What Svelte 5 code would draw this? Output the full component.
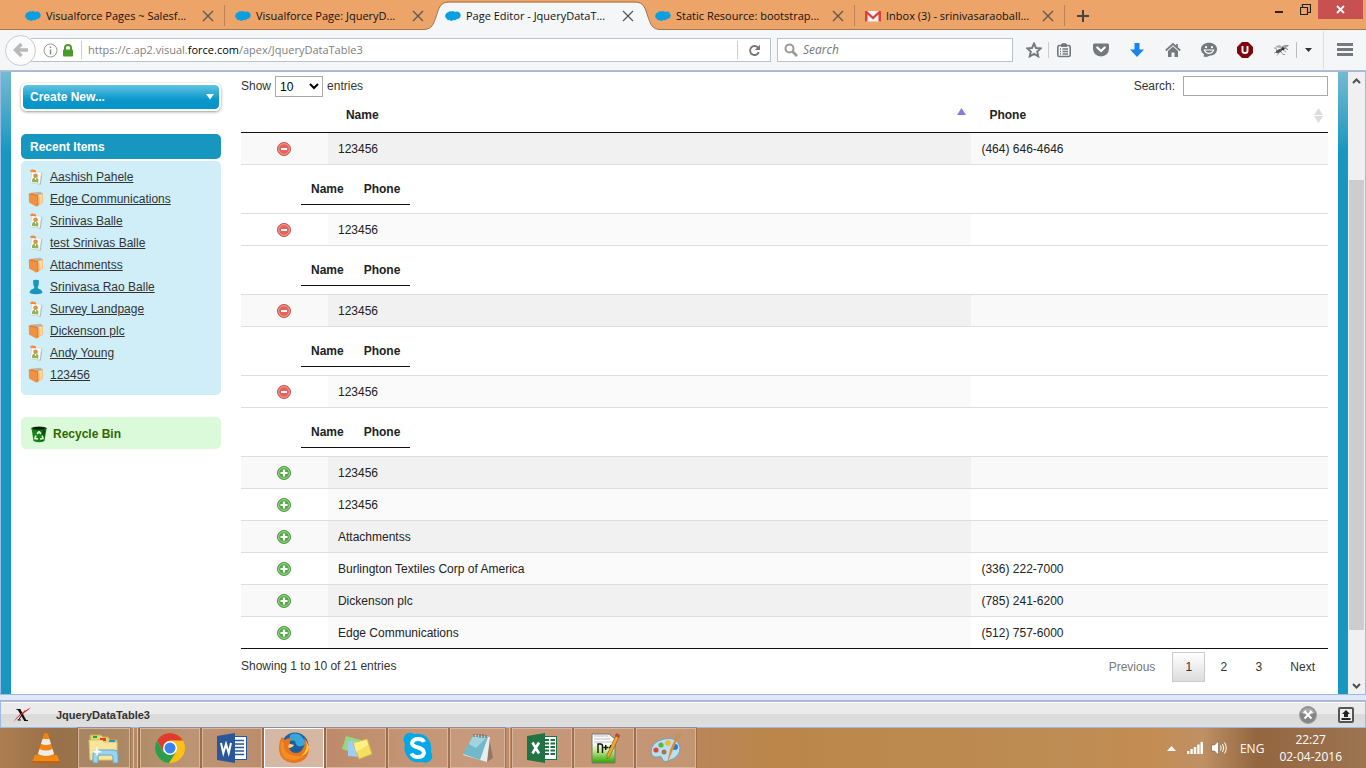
<script>
  const tabs = [
    { title: 'Visualforce Pages ~ Salesf...', icon: 'cloud' },
    { title: 'Visualforce Page: JqueryD...', icon: 'cloud' },
    { title: 'Page Editor - JqueryDataT...', icon: 'cloud', active: true },
    { title: 'Static Resource: bootstrap...', icon: 'cloud' },
    { title: 'Inbox (3) - srinivasaraoball...', icon: 'mail' }
  ];
  const recent = [
    ['contact', 'Aashish Pahele'],
    ['folder', 'Edge Communications'],
    ['contact', 'Srinivas Balle'],
    ['contact', 'test Srinivas Balle'],
    ['folder', 'Attachmentss'],
    ['user', 'Srinivasa Rao Balle'],
    ['contact', 'Survey Landpage'],
    ['folder', 'Dickenson plc'],
    ['contact', 'Andy Young'],
    ['folder', '123456']
  ];
  const rows = [
    { name: '123456', phone: '(464) 646-4646', open: true },
    { name: '123456', phone: '', open: true },
    { name: '123456', phone: '', open: true },
    { name: '123456', phone: '', open: true },
    { name: '123456', phone: '' },
    { name: '123456', phone: '' },
    { name: 'Attachmentss', phone: '' },
    { name: 'Burlington Textiles Corp of America', phone: '(336) 222-7000' },
    { name: 'Dickenson plc', phone: '(785) 241-6200' },
    { name: 'Edge Communications', phone: '(512) 757-6000' }
  ];
  const apps = ['vlc', 'explorer', 'chrome', 'word', 'firefox', 'sticky', 'skype', 'notepad', 'excel', 'npp', 'paint'];
</script>

<div class="window">
  <header class="tabstrip">
    <nav class="tabs" aria-label="Browser tabs">
      {#each tabs as tab}
        <div class="tab" class:active={tab.active}>
          {#if tab.active}
            <svg class="shape" viewBox="0 0 236 30" preserveAspectRatio="none" aria-hidden="true">
              <path d="M0 30V29.500C8 29 9 25 12 17C15 8 16 2.500 25 2.500H211C220 2.500 221 8 224 17C227 25 228 29 236 29.500V30Z" fill="#f5f6f7" />
              <path d="M0 29.500C8 29 9 25 12 17C15 8 16 2 25 2H211C220 2 221 8 224 17C227 25 228 29 236 29.500" fill="none" stroke="#a2754f" />
            </svg>
          {/if}
          <a class="tab-link" href="#tab">
            {#if tab.icon === 'cloud'}
              <svg width="16" height="16" viewBox="0 0 16 16" aria-hidden="true"><path d="M3.200 4.200Q4.500 2.600 6.500 3.600Q8.300 2 9.800 4Q12.500 2.600 14.600 4.800Q16.600 7 15 9.600Q13.800 11.400 11.800 11Q10.300 13.200 8.300 11.800Q6.500 14.200 4.700 12Q2 12.600 1.600 10.400Q-.6 9 .5 6.800Q.9 4.300 3.200 4.200Z" fill="#0a9fe0" /></svg>
            {:else}
              <svg width="16" height="16" viewBox="0 0 16 16" aria-hidden="true"><path d="M1 3H15V13.500H1Z" fill="#f4f4f4" /><path d="M0 3H2L8 8.500L14 3H16V13.500H13.500V6.600L8 11.400L2.500 6.600V13.500H0Z" fill="#dd4038" /></svg>
            {/if}
            <span>{tab.title}</span>
          </a>
          <button class="close" aria-label="Close tab"><svg width="12" height="12" viewBox="0 0 12 12"><path d="M1 1L11 11M11 1L1 11" stroke="#555" stroke-width="1.200" /></svg></button>
        </div>
      {/each}
      <button class="newtab" aria-label="New tab"><svg width="12" height="12" viewBox="0 0 12 12"><path d="M6 0V12M0 6H12" stroke="#444" stroke-width="2" /></svg></button>
    </nav>
    <div class="controls">
      <button aria-label="Minimize"><svg width="10" height="14" viewBox="0 0 10 14"><path d="M1 9H9" stroke="#222" stroke-width="2" /></svg></button>
      <button aria-label="Restore"><svg width="11" height="11" viewBox="0 0 11 11"><path d="M.5 3.500H7.500V10.500H.5ZM2.500 3V.5H10.500V8.500H8" fill="none" stroke="#222" stroke-width="1.200" /></svg></button>
      <button class="exit" aria-label="Close"><svg width="9" height="9" viewBox="0 0 9 9"><path d="M1 1L8 8M8 1L1 8" stroke="#fff" stroke-width="1.800" /></svg></button>
    </div>
  </header>

  <div class="toolbar">
    <button class="back" aria-label="Back"><svg width="16" height="16" viewBox="0 0 16 16"><path d="M15 8H3M8.500 2L2.500 8L8.500 14" fill="none" stroke="#b9b9b9" stroke-width="3.500" /></svg></button>
    <div class="urlbar">
      <svg class="info" width="15" height="15" viewBox="0 0 15 15" aria-hidden="true"><circle cx="7.500" cy="7.500" r="6.500" fill="none" stroke="#999" /><path d="M7.500 6.500V11.500M7.500 3.500V5" stroke="#888" stroke-width="1.400" /></svg>
      <svg width="10" height="13" viewBox="0 0 10 13" aria-hidden="true"><path d="M2 6V3.800Q2 1 5 1Q8 1 8 3.800V6" fill="none" stroke="#4c9b2a" stroke-width="2" /><rect y="5.500" width="10" height="7" rx="1" fill="#4c9b2a" /></svg>
      <span class="url">https://c.ap2.visual.<b>force.com</b>/apex/JqueryDataTable3</span>
      <button class="reload" aria-label="Reload"><svg width="13" height="13" viewBox="0 0 13 13"><path d="M10 3.600A4.500 4.500 0 1 0 10.800 8.200" fill="none" stroke="#777" stroke-width="1.900" /><path d="M12 .8V6H6.800Z" fill="#777" /></svg></button>
    </div>
    <label class="websearch">
      <svg width="15" height="15" viewBox="0 0 15 15" aria-hidden="true"><circle cx="5.500" cy="5.500" r="4" fill="none" stroke="#999" stroke-width="2" /><path d="M8.500 8.500L13 13" stroke="#999" stroke-width="2.600" /></svg>
      <input type="text" placeholder="Search" aria-label="Search the web" />
    </label>
    <div class="tools">
      <button class="star" aria-label="Bookmark"><svg width="16" height="16" viewBox="0 0 16 16"><path d="M8 1.500L10 6L14.800 6.400L11.200 9.600L12.300 14.400L8 11.900L3.700 14.400L4.800 9.600L1.200 6.400L6 6Z" fill="none" stroke="#75797d" stroke-width="1.900" /></svg></button>
      <button class="split" aria-label="Library"><svg width="16" height="16" viewBox="0 0 16 16"><rect x="1.800" y="3.500" width="12.400" height="11" rx="1.500" fill="none" stroke="#75797d" stroke-width="1.600" /><path d="M5 3Q5 1 8 1Q11 1 11 3V5H5Z" fill="#75797d" /><path d="M4 7H5M6.500 7H12M4 9.500H5M6.500 9.500H12M4 12H5M6.500 12H12" stroke="#75797d" stroke-width="1.300" /></svg></button>
      <button aria-label="Pocket"><svg width="16" height="16" viewBox="0 0 16 16"><path d="M1.500 1.500H14.500Q16 1.500 16 3V7Q15.500 14 8 14.500Q.5 14 0 7V3Q0 1.500 1.500 1.500Z" fill="#75797d" /><path d="M4.300 5.500L8 9L11.700 5.500" fill="none" stroke="#fff" stroke-width="2.200" stroke-linecap="round" /></svg></button>
      <button aria-label="Downloads"><svg width="16" height="16" viewBox="0 0 16 16"><path d="M5.500 1H10.500V7.500H15L8 15L1 7.500H5.500Z" fill="#1984ee" /></svg></button>
      <button aria-label="Home"><svg width="16" height="16" viewBox="0 0 16 16"><path d="M.8 8.500L8 2L15.200 8.500M12 5V2" fill="none" stroke="#75797d" stroke-width="1.700" /><path d="M3 9L8 4.600L13 9V15H9.500V10.500H6.500V15H3Z" fill="#75797d" /></svg></button>
      <button aria-label="Chat"><svg width="16" height="16" viewBox="0 0 16 16"><path d="M8 .8C12.500 .8 16 3.400 16 7.300C16 11 12.700 13.800 8.300 13.800C6 15.500 3.800 15 2.300 14.300Q3.500 13.500 3 12.300C1 11 0 9.500 0 7.300C0 3.400 3.500 .8 8 .8Z" fill="#75797d" /><circle cx="5" cy="5.200" r="1.100" fill="#fff" /><circle cx="11" cy="5.200" r="1.100" fill="#fff" /><path d="M3.300 8H12.700Q11.500 11.300 8 11.300Q4.500 11.300 3.300 8Z" fill="none" stroke="#fff" stroke-width="1.200" /></svg></button>
      <button aria-label="Blocker"><svg width="16" height="16" viewBox="0 0 16 16"><path d="M5 0H11L16 5V11L11 16H5L0 11V5Z" fill="#800409" /><path d="M5.500 4V9Q5.500 11 8 11Q10.500 11 10.500 9V4" fill="none" stroke="#fff" stroke-width="1.900" /></svg></button>
      <button aria-label="Debugger"><svg width="16" height="16" viewBox="0 0 16 16"><path d="M1 11L4 10L3 6L1 6M6 11L4 13.500M8 10L10 12.500L12 12.500M10 8L13 10" fill="none" stroke="#777" stroke-width=".7" /><ellipse cx="6" cy="9" rx="3.300" ry="1.700" transform="rotate(-25 6 9)" fill="#555" /><circle cx="10" cy="6.500" r="1.700" fill="#333" /><path d="M3 5Q7 2 9 5.500Z" fill="#bbb" stroke="#888" stroke-width=".5" /><path d="M9 5Q11 2.500 15.500 3.500L12 6L15 7.500Z" fill="#aaa" stroke="#666" stroke-width=".5" /></svg></button>
      <button class="drop" aria-label="Debugger options"><svg width="7" height="4" viewBox="0 0 7 4"><path d="M0 0H7L3.500 4Z" fill="#333" /></svg></button>
      <button class="menu" aria-label="Menu"><svg width="16" height="14" viewBox="0 0 16 14"><path d="M0 1.500H16M0 6.500H16M0 11.500H16" stroke="#75797d" stroke-width="3" /></svg></button>
    </div>
  </div>

  <div class="viewport">
    <div class="page">
      <aside>
        <button class="create">Create New...<svg width="8" height="6" viewBox="0 0 8 6" aria-hidden="true"><path d="M0 0H8L4 5.500Z" fill="#fff" /></svg></button>
        <section class="recent">
          <h2>Recent Items</h2>
          <ul>
            {#each recent as [kind, label]}
              <li>
                <svg width="16" height="16" viewBox="0 0 16 16" aria-hidden="true">
                  {#if kind === 'contact'}
                    <path d="M4 3L14.500 4L12.800 15.800L3 14Z" fill="#999" opacity=".6" />
                    <path d="M4 2L13.500 3.500L11.700 15L2.300 13.700Z" fill="#fdfdfb" stroke="#ccc" stroke-width=".5" />
                    <path d="M2.300 1.200Q4.500-.2 8 1.500V3.500L2.300 2.700Z" fill="#f28a36" />
                    <path d="M4 13Q3.500 8.500 7.200 8.500Q11 8.500 10.300 13.500Z" fill="#8fb355" /><circle cx="7.600" cy="6.800" r="2.300" fill="#d99248" /><path d="M6.700 9H8.400L7.300 11.500Z" fill="#fff" />
                  {:else if kind === 'folder'}
                    <path d="M5 1.500L12.500 .7L15 2.500V11.500L8 15.500Z" fill="#b9b8ad" /><path d="M9.500 5L15 2.500V11.500L8.500 15.500Z" fill="#ffc078" /><path d="M11 5L13 4.300V12" fill="none" stroke="#fff0d8" />
                    <path d="M.8 3L4 1.500L10 4L10.500 14.700L8 15.500L1 11.500Z" fill="#f09244" /><path d="M.8 3L9.500 5L9.800 14.500" fill="none" stroke="#cf7631" stroke-width=".7" />
                  {:else}
                    <path d="M5 1.500Q8-.2 11 1.500Q11 6.500 9.600 8.500Q10 10 12.500 10.500Q14.500 11.500 14.500 14Q8 16.500 1.500 14Q1.500 11.500 3.500 10.500Q6 10 6.400 8.500Q5 6.500 5 1.500Z" fill="#1797c0" />
                  {/if}
                </svg>
                <a href="#item">{label}</a>
              </li>
            {/each}
          </ul>
        </section>
        <a class="recycle" href="#bin">
          <svg width="16" height="17" viewBox="0 0 16 17" aria-hidden="true"><path d="M.5 2.500L2.500 15Q8 17.500 13.500 15L15.500 2.500Z" fill="#168316" /><path d="M11 4H14.500L13 14L10.500 15.500Z" fill="#065806" /><ellipse cx="8" cy="2.400" rx="7.800" ry="2" fill="#164c14" /><ellipse cx="8" cy="2.200" rx="5.500" ry="1.100" fill="#061b05" /><path d="M6 7.800L8 5.800L10 7.800M4.800 9.500L4 12.500L7 13M11.200 9.500L12 12.500L9 13" fill="none" stroke="#dff5dc" stroke-width="1.700" /></svg>
          Recycle Bin
        </a>
      </aside>

      <main>
        <div class="bar top">
          <label>Show <select><option>10</option><option>25</option></select> entries</label>
          <label class="find">Search:<input type="search" /></label>
        </div>
        <table class="grid">
          <colgroup><col class="c1" /><col class="c2" /><col /></colgroup>
          <thead>
            <tr>
              <th aria-label="Details"></th>
              <th><span class="th">Name<svg width="9" height="15" viewBox="0 0 9 15" aria-hidden="true"><path d="M0 7L4.500 0L9 7Z" fill="#8080dc" /></svg></span></th>
              <th><span class="th">Phone<svg width="9" height="15" viewBox="0 0 9 15" aria-hidden="true"><path d="M0 7L4.500 0L9 7ZM0 8H9L4.500 15Z" fill="#dcdcdc" /></svg></span></th>
            </tr>
          </thead>
          <tbody>
            {#each rows as row, i}
              <tr class="record" class:odd={i % 2 === 0}>
                <td class="toggle">
                  <button aria-label={row.open ? 'Hide details' : 'Show details'}>
                    <svg width="14" height="14" viewBox="0 0 14 14">
                      <circle cx="7" cy="7" r="6.500" fill={row.open ? '#e5635a' : '#53aa45'} stroke={row.open ? '#c0524a' : '#4a9640'} />
                      <circle cx="7" cy="7" r="5.400" fill="none" stroke={row.open ? '#f2a29b' : '#a5d69c'} />
                      {#if row.open}<path d="M4 7H10" stroke="#fff" stroke-width="2" />{:else}<path d="M3.500 7H10.500M7 3.500V10.500" stroke="#fff" stroke-width="2.200" />{/if}
                    </svg>
                  </button>
                </td>
                <td class="sorted">{row.name}</td>
                <td>{row.phone}</td>
              </tr>
              {#if row.open}
                <tr class="child">
                  <td colspan="3">
                    <table class="inner"><thead><tr><th>Name</th><th>Phone</th></tr></thead></table>
                  </td>
                </tr>
              {/if}
            {/each}
          </tbody>
        </table>
        <div class="bar bottom">
          <span>Showing 1 to 10 of 21 entries</span>
          <nav class="pages" aria-label="Pages">
            <button class="prev">Previous</button>
            <button class="current">1</button>
            <button>2</button>
            <button>3</button>
            <button>Next</button>
          </nav>
        </div>
      </main>
    </div>
    <div class="scroll" aria-hidden="true">
      <svg width="15" height="18" viewBox="0 0 15 18"><path d="M4 11L7.500 7.500L11 11" fill="none" stroke="#505050" stroke-width="2" /></svg>
      <div class="track"><div class="thumb"></div></div>
      <svg width="15" height="18" viewBox="0 0 15 18"><path d="M4 8L7.500 11.500L11 8" fill="none" stroke="#505050" stroke-width="2" /></svg>
    </div>
  </div>

  <div class="devbar">
    <svg width="18" height="16" viewBox="0 0 18 16" aria-hidden="true"><path d="M3.500 2.500H7.500M11 13.500H15M4.500 13H8M12 3.500L5.500 13" stroke="#111" stroke-width="1" /><path d="M4.500 2.500H7.500L13.500 13.500H11Z" fill="#111" /><path d="M.3 15.500Q4 9 9.500 5.500T17.700 .3Q16 3.500 11 6T.3 15.500Z" fill="#e22" /></svg>
    <strong>JqueryDataTable3</strong>
    <div class="devtools">
      <button aria-label="Tools"><svg width="18" height="18" viewBox="0 0 18 18"><circle cx="9" cy="9" r="8.500" fill="#858585" stroke="#a0a0a0" /><path d="M2 7Q3 2 9 2T16 7Q9 10 2 7Z" fill="#aaa" /><path d="M5.500 5.500L12.500 12.500M12.500 5.500L5.500 12.500" stroke="#fff" stroke-width="2" /><path d="M4.500 7L7 4.500M11 4.500L13.500 7" stroke="#fff" stroke-width="1.500" /></svg></button>
      <button aria-label="Expand"><svg width="16" height="16" viewBox="0 0 16 16"><rect x="1" y="1" width="14" height="14" rx="1" fill="#eee" stroke="#555" stroke-width="2" /><path d="M8 3L12 7H10V10H6V7H4ZM3.500 11H12.500V13H3.500Z" fill="#222" /></svg></button>
    </div>
  </div>

  <footer class="taskbar">
    {#each apps as app}
      <button class="app {app}" aria-label={app}>
        <svg width="32" height="32" viewBox="0 0 32 32">
          {#if app === 'vlc'}
            <path d="M5 23H27L30 30H2Z" fill="#f08a16" /><path d="M2 29H30V31H2Z" fill="#c9610c" /><path d="M14 2Q16 0 18 2L25 24Q16 29 7 24Z" fill="#f28312" /><path d="M12.600 7H19.400L21 12Q16 14 11 12ZM9.500 17Q16 20 22.500 17L24 22Q16 26 8 22Z" fill="#ececec" />
          {:else if app === 'explorer'}
            <path d="M2 3H13L15 5H20L22 8H29V27H4Z" fill="#ecd076" stroke="#c9a94e" /><path d="M5 4H9V6H5Z" fill="#18a83c" /><path d="M13 7H18V9H13Z" fill="#d6452b" /><path d="M21 9H26V11H21Z" fill="#2d8fd0" /><path d="M1 8H14L16 10H29V28H2Z" fill="#f8e59a" stroke="#dcc06c" /><path d="M12 6H18V8H12Z" fill="#d6452b" /><path d="M21 8H27V10H21Z" fill="#2d8fd0" /><path d="M5 31V22Q5 18 9 18H26Q30 18 30 22V31H25V25Q25 23 23 23H12Q10 23 10 25V31Z" fill="#9cd3ee" stroke="#5aa9d2" /><path d="M9 14L10 18L14 20L10 21L9 25L8 21L4 20L8 18Z" fill="#fff" />
          {:else if app === 'chrome'}
            <circle cx="16" cy="16" r="15" fill="#fbc116" /><path d="M3 8.500A15 15 0 0 1 29 8.500H16Q9.500 9 9.500 19.500Z" fill="#df3c2f" /><path d="M3 8.500A15 15 0 0 0 15 31L22 20Q16 25 9.500 19.500Z" fill="#2c9e4b" /><circle cx="16" cy="16" r="7" fill="#fff" /><circle cx="16" cy="16" r="5.500" fill="#3d83ef" />
          {:else if app === 'word' || app === 'excel'}
            <rect x="16" y="4.500" width="14.500" height="23" fill="#fff" stroke={app === 'word' ? '#2a579a' : '#217346'} />
            {#if app === 'word'}<path d="M19 8.500H28M19 12H28M19 15.500H28M19 19H28M19 22.500H28" stroke="#2a579a" stroke-width="1.500" />{:else}<path d="M19 8H23M19 11.500H23M19 15H23M19 18.500H23M19 22H23M24.500 8H29M24.500 11.500H29M24.500 15H29M24.500 18.500H29M24.500 22H29" stroke="#217346" stroke-width="2" />{/if}
            <path d="M1 4L19 1V31L1 28Z" fill={app === 'word' ? '#2a579a' : '#217346'} />
            {#if app === 'word'}<path d="M5 11L7.300 21L10 12L12.700 21L15 11" fill="none" stroke="#fff" stroke-width="2" />{:else}<path d="M6.500 10.500L13 21.500M13 10.500L6.500 21.500" stroke="#fff" stroke-width="2.600" />{/if}
          {:else if app === 'firefox'}
            <circle cx="17" cy="14" r="13.500" fill="#1c5f9c" /><path d="M12 3Q20-1 25 6T24 14Q18 16 17 9Q14 8 11 9Z" fill="#37a6db" /><path d="M4 5L7 8Q10 5 14 7Q11 9 12 12L16 13Q15 16 11 16Q13 21 18 21T25 16Q28 13 26 6Q31 10 31 17Q30 30 16 31Q2 30 1 17Q1 9 4 5Z" fill="#e9741e" /><path d="M3 9Q1 20 7 26Q17 31 26 24Q17 25 11 22T6 11Z" fill="#f38f22" /><path d="M28 9Q31 18 23 24Q30 22 31 15Z" fill="#ffd13f" /><path d="M12 12L16 13Q15 15 11 16Q9 14 12 12Z" fill="#ffd9a0" />
          {:else if app === 'sticky'}
            <path d="M6 4L21 8L17 22L2 17Z" fill="#96d77f" /><path d="M8 9L22 9L21 25L8 24Z" fill="#9dcef8" /><path d="M13 11L27 7L32 22L19 27Z" fill="#f4df62" stroke="#d8be42" /><path d="M14 11L27 8L28 13L16 20Z" fill="#ffef87" />
          {:else if app === 'skype'}
            <path d="M3 3Q7-1 12 2Q24 0 28 10Q30 15 29 20Q32 25 28 29Q24 32 20 30Q7 32 3 20Q2 16 3 12Q0 7 3 3Z" fill="#00a8ea" /><path d="M22 10Q21 7 16 7T10 11Q10 14 16 15.500T22 21Q21 25 16 25T9.500 21.500" fill="none" stroke="#fff" stroke-width="4" />
          {:else if app === 'notepad'}
            <path d="M27 5L31 26L25 30L20 27Z" fill="#74604b" opacity=".6" /><path d="M12 3L28 5L25 30L1 23Z" fill="#e6edf1" /><path d="M11 4L26 5L18 28L1 22Z" fill="#72b8c9" /><path d="M11 4L25 5L14 16L7 12Z" fill="#a2d4df" /><path d="M12 2V5M15 2V5M18 2V6M21 2V6M24 3V6" stroke="#555" />
          {:else if app === 'npp'}
            <defs><linearGradient id="leaf" x1="0" y1="0" x2="0" y2="1"><stop offset=".3" stop-color="#fff" /><stop offset=".6" stop-color="#bfe68a" /><stop offset="1" stop-color="#2ea300" /></linearGradient></defs>
            <path d="M4 2H21L27 7V31H4Z" fill="url(#leaf)" stroke="#777" /><path d="M6 4H20M6 7H22M6 10H25" stroke="#bbb" /><path d="M10 21V12H12.500Q14.500 12 14.500 14V21M15.500 15.500H20M17.700 13V18M20.500 15.500H25M22.700 13V18" fill="none" stroke="#111" stroke-width="1.400" /><path d="M28 3L31 5L22 24L19 27V23Z" fill="#edaa30" stroke="#8a5b18" stroke-width=".7" /><path d="M28 1L32 3L31 6L27 4Z" fill="#ba4548" />
          {:else}
            <path d="M1 20Q1 10 14 7T30 15Q31 25 18 29Q13 31 12 26Q11 23 8 25Q2 26 1 20Z" fill="#b9dff1" stroke="#6da0bb" /><circle cx="6" cy="18" r="2.600" fill="#dc473c" /><circle cx="11" cy="13" r="2.600" fill="#62b143" /><circle cx="18" cy="11" r="2.800" fill="#f3bb29" /><circle cx="25" cy="15" r="3" fill="#267bce" /><circle cx="14" cy="20" r="2.500" fill="#a17650" /><path d="M27 8L22 20L17 32L20 18L25 7Z" fill="#e58a2e" /><path d="M24 7L26 2L32 1L30 6L27 8Z" fill="#c2925f" />
          {/if}
        </svg>
      </button>
    {/each}
    <div class="tray">
      <svg width="9" height="5" viewBox="0 0 9 5" aria-hidden="true"><path d="M0 5L4.500 0L9 5Z" fill="#fff" /></svg>
      <svg width="16" height="14" viewBox="0 0 16 14" aria-hidden="true"><path d="M0 10H2.400V13H0ZM3.400 8H5.800V13H3.400ZM6.800 6H9.200V13H6.800ZM10.200 3.500H12.600V13H10.200ZM13.500 1H16V13H13.500Z" fill="#fff" /></svg>
      <svg width="16" height="16" viewBox="0 0 16 16" aria-hidden="true"><path d="M.5 5H3.500L7.500 1V15L3.500 11H.5Z" fill="#fff" stroke="#62472f" stroke-width=".5" /><path d="M9.500 5.500Q11 8 9.500 10.500M11.500 4Q14 8 11.500 12M13.500 2.500Q17 8 13.500 13.500" fill="none" stroke="#fff" stroke-width="1" /></svg>
      <span>ENG</span>
      <time>22:27<br />02-04-2016</time>
    </div>
  </footer>
</div>

<style>
  :global(body) { margin: 0; }
  * { box-sizing: border-box; }
  button { border: 0; padding: 0; margin: 0; background: none; font: inherit; color: inherit; display: flex; align-items: center; justify-content: center; }
  svg { display: block; flex: none; }
  .window { display: flex; flex-direction: column; min-height: 100vh; font: 12px/15px "Liberation Sans", Arial, sans-serif; color: #333; background: #dfe8f8; }

  .tabstrip { display: flex; justify-content: space-between; height: 30px; background: #eda468; border-bottom: 1px solid #a2754f; font: 11px/16px "Open Sans", sans-serif; color: #111; }
  .tabs { display: flex; padding-left: 15px; min-width: 0; }
  .tab { position: relative; display: flex; align-items: center; width: 210px; padding: 2px 11px 0 10px; }
  .tab::after { content: ""; position: absolute; right: 0; top: 5px; bottom: 3px; width: 1px; background: #bc8453; }
  .tab.active::after, .tab:nth-child(2)::after { display: none; }
  .shape { position: absolute; left: -11px; top: 0; width: 236px; height: 30px; }
  .tab-link { position: relative; display: flex; flex: 1; min-width: 0; gap: 5px; align-items: center; color: inherit; text-decoration: none; white-space: nowrap; }
  .close { position: relative; }
  .newtab { margin-left: 12px; padding-top: 2px; }
  .controls { display: flex; align-items: flex-start; padding-right: 3px; }
  .controls button { width: 26px; height: 19px; }
  .controls .exit { width: 45px; background: #c75050; }

  .toolbar { display: flex; align-items: center; height: 41px; padding-left: 5px; background: #f5f6f7; border-bottom: 1px solid #b9bdbb; font: 11px/18px "Open Sans", sans-serif; }
  .back { position: relative; width: 31px; height: 31px; border: 1px solid #c9cbce; border-radius: 50%; background: #fbfbfb; }
  .urlbar { display: flex; flex: 1; align-items: center; height: 24px; margin-left: -5px; padding-left: 12px; background: #fff; border: 1px solid #b8c2cb; border-left: 0; }
  .info { margin-right: 5px; }
  .url { flex: 1; margin-left: 8px; padding-left: 6px; border-left: 1px solid #ccc; color: #808080; white-space: nowrap; }
  .url b { font-weight: 400; color: #000; }
  .reload { width: 33px; height: 18px; border-left: 1px solid #ccc; }
  .websearch { display: flex; align-items: center; gap: 4px; width: 236px; height: 24px; margin-left: 6px; padding-left: 6px; border: 1px solid #b8c2cb; background: #fff; }
  .websearch input { flex: 1; min-width: 0; padding: 0; border: 0; outline: 0; background: none; font: 12px/18px "Open Sans", sans-serif; }
  .websearch input::placeholder { color: #777; font-style: italic; opacity: 1; }
  .tools { display: flex; align-items: center; }
  .tools button { width: 36px; height: 30px; }
  .tools .star { width: 28px; margin-left: 7px; }
  .tools .split { width: 35px; height: 16px; padding-right: 4px; border-left: 1px solid #ccc; }
  .tools .drop { width: 24px; height: 16px; border-left: 1px solid #bbb; margin: 0 3px 0 -3px; }
  .tools .menu { width: 43px; height: 38px; border-left: 1px solid #ddd; }

  .viewport { display: flex; flex: 1; background: #fff; border: 1px solid #9db9e6; }
  .page { display: flex; flex: 1; gap: 20px; padding: 4px 10px 10px; border: solid transparent; border-width: 0 10px; background: linear-gradient(#fff, #fff) padding-box, linear-gradient(#74bad2, #1797c0 80px) border-box; }
  aside { width: 200px; flex: none; padding-top: 7px; }
  .create { justify-content: space-between; width: 100%; height: 28px; padding: 0 5px 0 7px; border: 2px solid #fff; border-radius: 6px; background: linear-gradient(#62c4e3, #0a98ca 60%, #0693c5) padding-box; box-shadow: 0 1px 3px #999; color: #fff; font-weight: 700; }
  .recent { margin-top: 23px; }
  h2 { margin: 0 0 2px; padding: 6px 9px 4px; border-radius: 5px; background: #1797c0; color: #fff; font-size: 12px; line-height: 15px; }
  ul { list-style: none; margin: 0; padding: 5px 7px 9px; border-radius: 5px; background: #cfeef8; }
  li { display: flex; align-items: center; gap: 6px; height: 22px; }
  li a { color: #333; }
  .recycle { display: flex; align-items: center; gap: 6px; height: 32px; margin-top: 22px; padding: 3px 10px 0; border-radius: 5px; background: #dafada; color: #360; font-weight: 700; text-decoration: none; }

  main { flex: 1; min-width: 0; }
  .bar { display: flex; justify-content: space-between; }
  .top { height: 21px; }
  .bar label { display: flex; align-items: center; gap: 4px; }
  select { width: 48px; height: 21px; padding: 0; border: 1px solid #aaa; background: #fff; font: 12px "Liberation Sans", Arial, sans-serif; color: #000; }
  .bar .find { height: 20px; gap: 8px; }
  .find input { width: 145px; height: 20px; border: 1px solid #aaa; background: #fff; }
  table { border-collapse: separate; border-spacing: 0; }
  .grid { width: 100%; table-layout: fixed; border-bottom: 1px solid #111; color: #222; }
  .c1 { width: 8%; }
  .c2 { width: 59.2%; }
  th { padding: 11px 0 9px 18px; border-bottom: 1px solid #111; text-align: left; font-weight: 700; }
  .th { display: flex; justify-content: space-between; padding-right: 5px; }
  td { padding: 9px 10px 7px; height: 32px; border-top: 1px solid #ddd; }
  tbody tr:first-child td { border-top: 0; height: 31px; }
  .odd td { background: #f9f9f9; }
  .sorted { background: #fafafa; }
  .odd .sorted { background: #f1f1f1; }
  .toggle, .child td { padding: 8px 10px; }
  .toggle button { margin: 0 auto; height: 15px; }
  .inner { margin-left: 50px; }
  .inner th { padding: 9px 10px 7px; }
  .bottom { padding-top: 3px; line-height: 28px; }
  .pages { display: flex; gap: 2px; }
  .pages button { min-width: 33px; height: 30px; padding: 0 12px; border: 1px solid transparent; }
  .pages .prev { color: #777; margin-right: 2px; }
  .pages .current { border-color: #cacaca; background: linear-gradient(#fff, #dcdcdc); }

  .scroll { display: flex; flex-direction: column; width: 17px; padding: 0 1px; background: #f0f0f0; }
  .track { flex: 1; display: flex; padding-top: 90px; padding-bottom: 46px; }
  .thumb { flex: 1; background: #cdcdcd; }

  .devbar { display: flex; align-items: center; height: 28px; margin-top: 5px; padding: 2px 11px 0 12px; border: 1px solid #9db9e6; background: linear-gradient(#bbb, #bbb 1px, #fff 1px, #fff 2px, #ebebeb 2px, #ebebeb 50%, #dadada 50%, #dedede); font-size: 11px; }
  .devbar strong { flex: 1; margin-left: 25px; }
  .devtools { display: flex; gap: 21px; }

  .taskbar { display: flex; gap: 2px; height: 40px; padding: 0 24px 0 16px; background: linear-gradient(90deg, #ad7d50, #987049 4%, #9f774e 9%, #b28560 14%, #b07650 22%, #c08b69 34%, #ba855f 49%, #bb8648 57%, #bd8d55 78%, #c38c52 84%, #bf9064 88%, #946640 92%, #9c7450); }
  .app { width: 60px; height: 40px; border: 1px solid #d9b69b; background: #ffffff22; outline: 1px solid #75513466; outline-offset: 0; }
  .vlc { border-color: transparent; background: none; outline: 0; }
  .firefox { background: #ffffff77; border-color: #fff; }
  .explorer { width: 52px; margin-right: 8px; box-shadow: 3px 0 #b58c6a, 4px 0 #dabca4, 7px 0 #b58c6a, 8px 0 #dabca4; }
  .notepad { width: 55px; margin-right: 5px; box-shadow: 4px 0 #bc8d6c, 5px 0 #dabca4; }
  .tray { display: flex; align-items: center; margin-left: auto; gap: 11px; color: #fff; font: 12px/17px "Open Sans", sans-serif; }
  .tray svg + svg + svg { margin-left: -3px; }
  .tray span { margin-left: 2px; }
  .tray time { margin-left: 4px; text-align: center; }
</style>
